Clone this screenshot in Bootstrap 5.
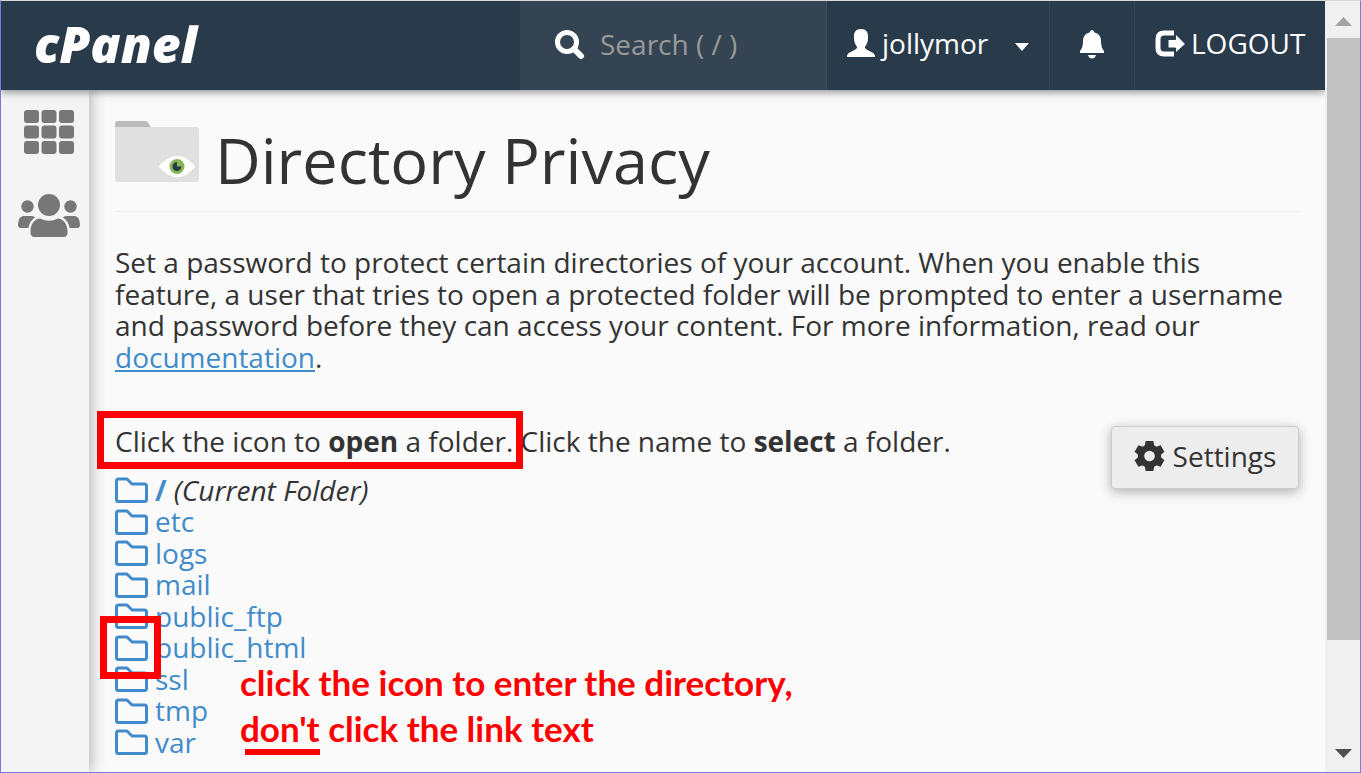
<!DOCTYPE html>
<html lang="en">
<head>
<meta charset="utf-8">
<meta name="viewport" content="width=device-width, initial-scale=1">
<title>cPanel - Directory Privacy</title>
<link href="https://cdn.jsdelivr.net/npm/bootstrap@5.3.0/dist/css/bootstrap.min.css" rel="stylesheet">
<style>
  body { font-family: "Open Sans", "Noto Sans", sans-serif; font-size: 28px; line-height: 1.125; color: #333; background: #fafafa; }
  a { color: #428bca; }
  svg { display: block; flex: none; }
  .window-frame { border: 1px solid #7a7ad8; border-top-color: #d5dbdc; }
  .topbar { height: 89px; background: #293a4a; box-shadow: 0 2px 8px rgba(0,0,0,.45); z-index: 2; }
  .brand { font-size: 50px; font-weight: 800; font-style: italic; line-height: 1; color: #fff; padding: 0 0 4px 33px; }
  .bar-search { width: 307px; padding: 0 0 2px 34px; gap: 14px; background: #354453; border-right: 1px solid #3f5263; }
  .bar-search input { width: 200px; padding: 0; border: 0; background: transparent; color: #fff; outline: 0; }
  .bar-search input::placeholder { color: #999; opacity: 1; }
  .bar-item { color: #fff; border: 0; border-right: 1px solid #344657; background: transparent; padding: 0 20px 3px; }
  .bar-user { width: 223px; gap: 7px; }
  .bar-user .caret { margin-left: 20px; margin-top: 6px; }
  .bar-bell { width: 85px; padding: 0 0 3px; }
  .bar-logout { width: 190px; gap: 6px; border: 0; }
  .sidebar-rail { width: 88px; gap: 40px; padding-top: 20px; background: #f4f4f4; box-shadow: 2px 0 14px rgba(0,0,0,.3); z-index: 1; }
  .page { padding: 31px 26px 0; }
  .page-title { gap: 15px; height: 91px; border-bottom: 1px solid #eee; margin-bottom: 35px; }
  .page-title h1 { font-size: 63px; line-height: 77px; font-weight: 400; margin: 0; }
  .intro { margin-bottom: 53px; }
  .hint { margin-bottom: 17px; }
  .btn-settings { width: 188px; height: 63px; gap: 8px; padding: 0 0 3px; font-size: 28px; color: #333; background: #ededed; border: 1px solid #ccc; border-radius: 4px; box-shadow: 0 3px 12px rgba(0,0,0,.3); }
  .folders li { gap: 7px; }
  .folders a { text-decoration: none; }
  .marked { position: relative; }
  .marked::after { content: ""; position: absolute; border: 7px solid #f00; pointer-events: none; }
  .marked-text::after { inset: -11px -10px -9px -18px; }
  .marked-icon::after { inset: -19px -13px -18px -15px; }
  .callout { position: absolute; left: 125px; top: 233px; font-family: Lato, sans-serif; font-weight: 700; font-size: 35px; line-height: 46px; color: #f00; white-space: nowrap; }
  .underlined { position: relative; }
  .underlined::after { content: ""; position: absolute; left: 5px; right: 0; bottom: -6px; height: 6px; background: #f00; }
  .scroll-track { width: 35px; background: #f0f0f0; padding-left: 2px; }
  .scroll-end { height: 37px; }
  .scroll-thumb { flex: 602 0 0; background: #c1c1c1; }
  .scroll-rest { flex: 95 0 0; }
</style>
</head>
<body>
<svg class="d-none">
  <symbol id="folder" viewBox="0 0 33 26"><path d="M1.500 4Q1.500 2 3.500 2H12L17 7H29.500Q31.500 7 31.500 9V22.500Q31.500 24.500 29.500 24.500H3.500Q1.500 24.500 1.500 22.500Z" fill="none" stroke="#428bca" stroke-width="3" stroke-linejoin="round"/></symbol>
</svg>
<div class="window-frame vh-100 d-flex overflow-hidden">
  <div class="flex-grow-1 d-flex flex-column overflow-hidden">
    <header class="topbar d-flex flex-shrink-0 position-relative">
      <a class="brand flex-grow-1 align-self-center text-decoration-none" href="#">cPanel</a>
      <form class="bar-search d-flex align-items-center" role="search">
        <svg width="32" height="32" viewBox="0 0 32 32" fill="none" stroke="#fff"><circle cx="13" cy="13" r="9.5" stroke-width="5"/><path d="M20 20L27 27" stroke-width="6" stroke-linecap="round"/></svg>
        <input type="text" aria-label="Search" placeholder="Search ( / )">
      </form>
      <button type="button" class="bar-item bar-user d-flex align-items-center">
        <svg width="28" height="30" viewBox="0 0 28 30" fill="#fff"><path d="M14 0C19 0 21.500 3 21 9C21 14 19 16 18 18V19C20 22 28 23 28 27V28H0V27C0 23 8 22 10 19V18C9 16 7 14 7 9C6.500 3 9 0 14 0Z"/></svg>
        <span>jollymor</span>
        <svg class="caret" width="14" height="8" viewBox="0 0 14 8"><path d="M0 0H14L7 8Z" fill="#fff"/></svg>
      </button>
      <button type="button" class="bar-item bar-bell d-flex align-items-center justify-content-center" aria-label="Notifications">
        <svg width="26" height="30" viewBox="0 0 26 30" fill="#fff"><path d="M13 1Q15 1 15.500 3.500Q22 5 22 12Q22 19 25 22V24H1V22Q4 19 4 12Q4 5 10.500 3.500Q11 1 13 1ZM9 26H17Q16 29.500 13 29.500T9 26Z"/></svg>
      </button>
      <a class="bar-item bar-logout d-flex align-items-center text-decoration-none" href="#">
        <svg width="30" height="28" viewBox="0 0 30 28"><path d="M19 3H9Q3 3 3 9V18Q3 24 9 24H19" fill="none" stroke="#fff" stroke-width="5"/><path d="M13 9.500H20.500V4L30.500 14L20.500 23V18H13Z" fill="#fff" stroke="#293a4a" stroke-width="1"/></svg>
        <span>LOGOUT</span>
      </a>
    </header>
    <div class="d-flex flex-grow-1">
      <nav class="sidebar-rail d-flex flex-column align-items-center flex-shrink-0">
        <a href="#" aria-label="Home" class="ms-2"><svg width="50" height="44" viewBox="0 0 50 44" fill="#777"><rect width="15" height="13" rx="3"/><rect x="17.500" width="15" height="13" rx="3"/><rect x="35" width="15" height="13" rx="3"/><rect y="15.500" width="15" height="13" rx="3"/><rect x="17.500" y="15.500" width="15" height="13" rx="3"/><rect x="35" y="15.500" width="15" height="13" rx="3"/><rect y="31" width="15" height="13" rx="3"/><rect x="17.500" y="31" width="15" height="13" rx="3"/><rect x="35" y="31" width="15" height="13" rx="3"/></svg></a>
        <a href="#" aria-label="Users" class="ms-2"><svg width="62" height="44" viewBox="0 0 62 44" fill="#777"><circle cx="31" cy="11" r="11"/><circle cx="9.500" cy="12.500" r="6.200"/><circle cx="52.500" cy="12.500" r="6.200"/><path d="M22 24.500Q31 29 40 24.500C46 25 50 31 49.500 39Q49 43 46 43H16Q13 43 12.500 39C12 31 16 25 22 24.500ZM5 22H14Q16 22 17 23.500Q11.500 27 10.500 34H3Q0 34 0 31Q0 23 5 22ZM57 22H48Q46 22 45 23.500Q50.500 27 51.500 34H59Q62 34 62 31Q62 23 57 22Z"/></svg></a>
      </nav>
      <main class="page flex-grow-1">
        <div class="page-title d-flex">
          <svg width="85" height="62" viewBox="0 0 85 62"><path d="M0 8V3Q0 0 3 0H30Q33 0 35 5L37 8Z" fill="#bcbcbc"/><path d="M0 6H81Q84 6 84 9V58Q84 61 81 61H3Q0 61 0 58Z" fill="#e0e0e0"/><path d="M43.500 45.500Q62 24 80.500 45.500Q62 67 43.500 45.500Z" fill="#fff"/><circle cx="62" cy="45.500" r="7.500" fill="#84b857"/><path d="M62 45.500V41A4.500 4.500 0 1 0 66.500 45.500Z" fill="#293a4a"/></svg>
          <h1>Directory Privacy</h1>
        </div>
        <p class="intro">Set a password to protect certain directories of your account. When you enable this feature, a user that tries to open a protected folder will be prompted to enter a username and password before they can access your content. For more information, read our <a href="#">documentation</a>.</p>
        <div class="d-flex justify-content-between align-items-start">
          <section class="position-relative">
            <p class="hint"><span class="marked marked-text">Click the icon to <b>open</b> a folder.</span> Click the name to <b>select</b> a folder.</p>
            <ul class="folders list-unstyled mb-0">
              <li class="d-flex align-items-center"><a href="#" aria-label="Open /"><svg width="33" height="26"><use href="#folder"/></svg></a><span><a href="#"><b>/</b></a> <i>(Current Folder)</i></span></li>
              <li class="d-flex align-items-center"><a href="#" aria-label="Open etc"><svg width="33" height="26"><use href="#folder"/></svg></a><a href="#">etc</a></li>
              <li class="d-flex align-items-center"><a href="#" aria-label="Open logs"><svg width="33" height="26"><use href="#folder"/></svg></a><a href="#">logs</a></li>
              <li class="d-flex align-items-center"><a href="#" aria-label="Open mail"><svg width="33" height="26"><use href="#folder"/></svg></a><a href="#">mail</a></li>
              <li class="d-flex align-items-center"><a href="#" aria-label="Open public_ftp"><svg width="33" height="26"><use href="#folder"/></svg></a><a href="#">public_ftp</a></li>
              <li class="d-flex align-items-center"><a href="#" aria-label="Open public_html" class="marked marked-icon"><svg width="33" height="26"><use href="#folder"/></svg></a><a href="#">public_html</a></li>
              <li class="d-flex align-items-center"><a href="#" aria-label="Open ssl"><svg width="33" height="26"><use href="#folder"/></svg></a><a href="#">ssl</a></li>
              <li class="d-flex align-items-center"><a href="#" aria-label="Open tmp"><svg width="33" height="26"><use href="#folder"/></svg></a><a href="#">tmp</a></li>
              <li class="d-flex align-items-center"><a href="#" aria-label="Open var"><svg width="33" height="26"><use href="#folder"/></svg></a><a href="#">var</a></li>
            </ul>
            <div class="callout">click the icon to enter the directory,<br><span class="underlined">don't</span> click the link text</div>
          </section>
          <button type="button" class="btn btn-settings d-flex align-items-center justify-content-center">
            <svg width="31" height="32" viewBox="-16 -16 32 32" fill="#333"><path fill-rule="evenodd" d="M-12 0A12 12 0 1 0 12 0A12 12 0 1 0-12 0ZM-5.500 0A5.500 5.500 0 1 1 5.500 0A5.500 5.500 0 1 1-5.500 0Z"/><path id="tooth" d="M-5-10L-4-15.500H4L5-10ZM-5 10L-4 15.500H4L5 10Z"/><use href="#tooth" transform="rotate(60)"/><use href="#tooth" transform="rotate(120)"/></svg>
            <span>Settings</span>
          </button>
        </div>
      </main>
    </div>
  </div>
  <div class="scroll-track d-flex flex-column flex-shrink-0" aria-hidden="true">
    <div class="scroll-end d-flex align-items-center justify-content-center flex-shrink-0 pt-1"><svg width="17" height="9" viewBox="0 0 17 9"><path d="M0 9L8.500 0L17 9Z" fill="#a3a3a3"/></svg></div>
    <div class="scroll-thumb"></div>
    <div class="scroll-rest"></div>
    <div class="scroll-end d-flex align-items-center justify-content-center flex-shrink-0"><svg width="17" height="9" viewBox="0 0 17 9"><path d="M0 0L8.500 9L17 0Z" fill="#505050"/></svg></div>
  </div>
</div>
<script src="https://cdn.jsdelivr.net/npm/bootstrap@5.3.0/dist/js/bootstrap.bundle.min.js"></script>
</body>
</html>
